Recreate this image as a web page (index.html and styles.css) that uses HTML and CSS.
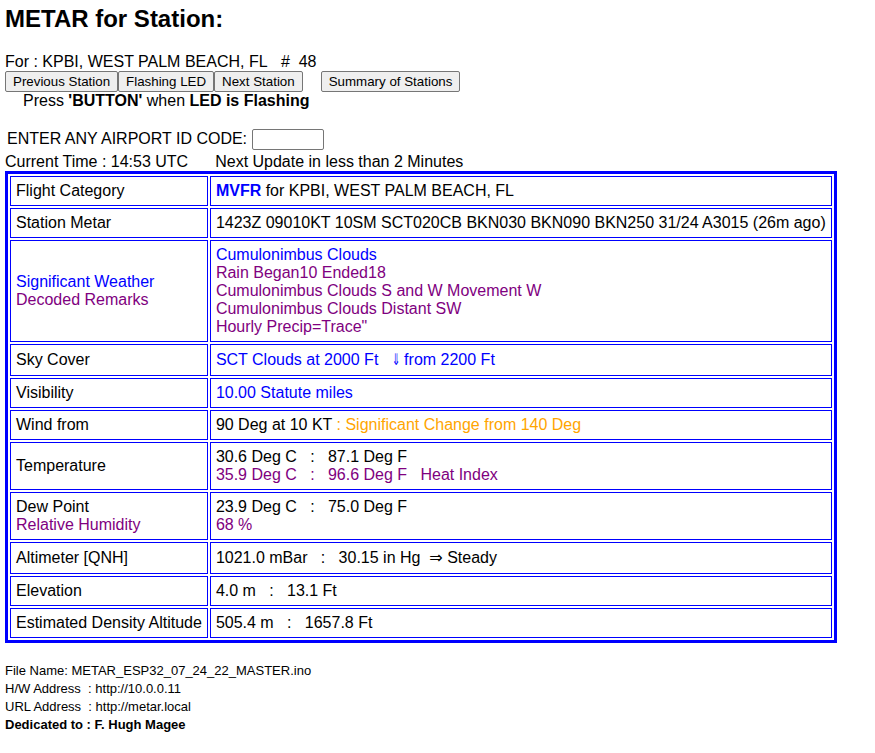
FILE: index.html
```html
<!DOCTYPE html>
<html>
<head>
<meta charset="utf-8">
<title>METAR for Station</title>
<link rel="stylesheet" href="styles.css">
</head>
<body>
<h2 class="title">METAR for Station:</h2>
<div class="line">For : KPBI, WEST PALM BEACH, FL&nbsp;&nbsp; #&nbsp; 48</div>
<div class="btns">
  <button class="btn">Previous Station</button><button class="btn">Flashing LED</button><button class="btn">Next Station</button><button class="btn btn-gap">Summary of Stations</button>
</div>
<div class="line press">Press <b>'BUTTON'</b> when <b>LED is Flashing</b></div>
<div class="spacer"></div>
<div class="enter">
  <span class="enter-label">ENTER ANY AIRPORT ID CODE:</span>
  <input class="code" type="text">
</div>
<div class="line time">Current Time : 14:53 UTC<span class="next">Next Update in less than 2 Minutes</span></div>
<table class="metar">
  <tbody>
    <tr><td class="k">Flight Category</td><td class="v"><b class="blue">MVFR</b> for KPBI, WEST PALM BEACH, FL</td></tr>
    <tr><td class="k">Station Metar</td><td class="v">1423Z 09010KT 10SM SCT020CB BKN030 BKN090 BKN250 31/24 A3015 (26m ago)</td></tr>
    <tr><td class="k"><span class="blue">Significant Weather</span><br><span class="purple">Decoded Remarks</span></td><td class="v"><span class="blue">Cumulonimbus Clouds</span><br><span class="purple">Rain Began10 Ended18<br>Cumulonimbus Clouds S and W Movement W<br>Cumulonimbus Clouds Distant SW<br>Hourly Precip=Trace"</span></td></tr>
    <tr><td class="k">Sky Cover</td><td class="v tall blue">SCT Clouds at 2000 Ft &nbsp; <span class="arr">⇓</span> from 2200 Ft</td></tr>
    <tr><td class="k">Visibility</td><td class="v blue">10.00 Statute miles</td></tr>
    <tr><td class="k">Wind from</td><td class="v">90 Deg at 10 KT<span class="orange"> : Significant Change from 140 Deg</span></td></tr>
    <tr><td class="k">Temperature</td><td class="v">30.6 Deg C &nbsp; : &nbsp; 87.1 Deg F<br><span class="purple">35.9 Deg C &nbsp; : &nbsp; 96.6 Deg F &nbsp; Heat Index</span></td></tr>
    <tr><td class="k">Dew Point<br><span class="purple">Relative Humidity</span></td><td class="v">23.9 Deg C &nbsp; : &nbsp; 75.0 Deg F<br><span class="purple">68 %</span></td></tr>
    <tr><td class="k">Altimeter [QNH]</td><td class="v tall">1021.0 mBar &nbsp; : &nbsp; 30.15 in Hg &nbsp;<span class="arr-r">⇒</span> Steady</td></tr>
    <tr><td class="k">Elevation</td><td class="v">4.0 m &nbsp; : &nbsp; 13.1 Ft</td></tr>
    <tr><td class="k">Estimated Density Altitude</td><td class="v">505.4 m &nbsp; : &nbsp; 1657.8 Ft</td></tr>
  </tbody>
</table>
<div class="footer">
  <div>File Name: METAR_ESP32_07_24_22_MASTER.ino</div>
  <div>H/W Address &nbsp;: http://10.0.0.11</div>
  <div>URL Address &nbsp;: http://metar.local</div>
  <div class="ded">Dedicated to : F. Hugh Magee</div>
</div>
</body>
</html>
```
FILE: styles.css
```css
body {
  margin: 5px;
  font-family: "Liberation Sans", Arial, sans-serif;
  font-size: 16px;
  line-height: 18px;
  color: #000;
  background: #fff;
}

.title {
  font-size: 24px;
  font-weight: bold;
  line-height: 28px;
  margin: 0 0 20px;
}

.line {
  height: 18px;
  white-space: nowrap;
}

.btns {
  display: flex;
  height: 21px;
}

.btn {
  font-family: "Liberation Sans", Arial, sans-serif;
  font-size: 13.333px;
  line-height: 15px;
  height: 21px;
  box-sizing: border-box;
  padding: 0 7px;
  margin: 0;
  border: 1px solid #767676;
  border-radius: 2px;
  background: #efefef;
  color: #000;
}

.btn-gap {
  margin-left: 18px;
}

.press {
  padding-left: 18px;
}

.spacer {
  height: 18px;
}

.enter {
  display: flex;
  align-items: flex-start;
  height: 25px;
  padding-left: 2px;
  white-space: nowrap;
}

.enter-label {
  padding-top: 2px;
}

.code {
  margin: 1px 0 0 5px;
  width: 72px;
  height: 21px;
  box-sizing: border-box;
  border: 1px solid #767676;
  border-radius: 2px;
  padding: 1px 2px;
  background: #fff;
}

.next {
  margin-left: 27px;
}

.metar {
  border: 3px solid #0000ff;
  border-collapse: separate;
  border-spacing: 2px;
}

.metar td {
  border: 1px solid #0000ff;
  padding: 5px;
  line-height: 18px;
  vertical-align: middle;
  white-space: nowrap;
}

.metar td.tall {
  line-height: 20px;
}

.blue {
  color: #0000ff;
}

.purple {
  color: #800080;
}

.orange {
  color: #ffa500;
}

.arr {
  display: inline-block;
  width: 8px;
  font-family: "DejaVu Sans", sans-serif;
  font-size: 16px;
  transform: scaleX(0.6);
  transform-origin: left center;
}

.arr-r {
  font-family: "DejaVu Sans", sans-serif;
  font-size: 16px;
}

.footer {
  margin-top: 19px;
  font-size: 13px;
  line-height: 18px;
}

.ded {
  font-weight: bold;
}
```
